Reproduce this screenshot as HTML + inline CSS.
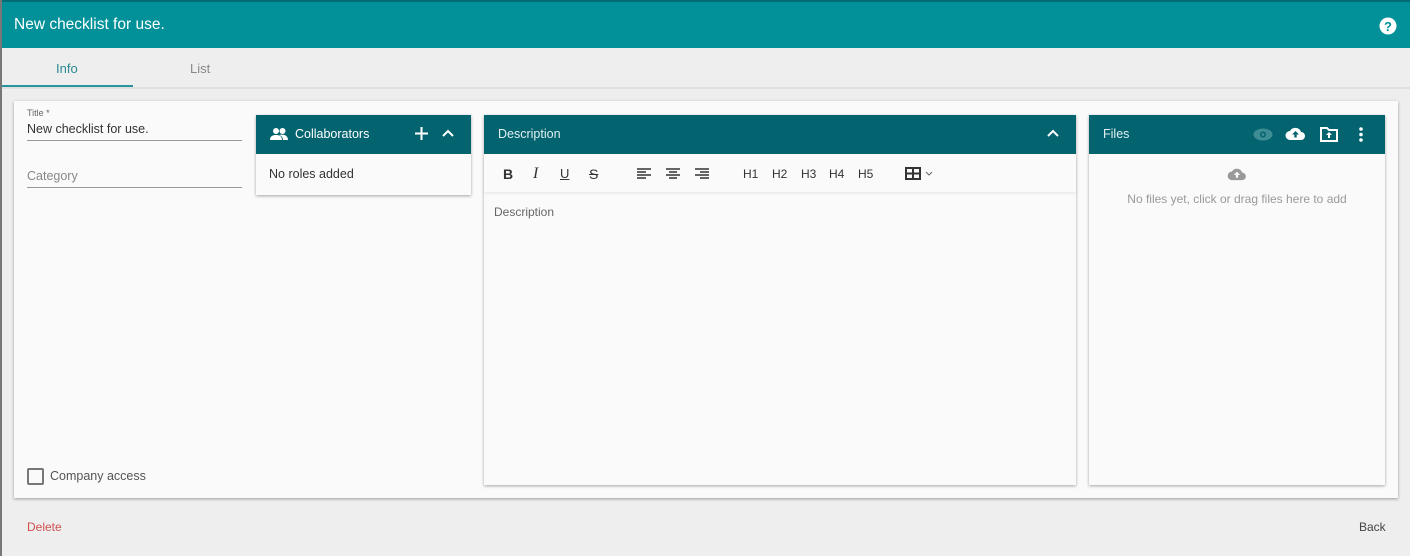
<!DOCTYPE html>
<html><head><meta charset="utf-8"><style>
*{box-sizing:border-box;margin:0;padding:0}
body{width:1410px;height:556px;background:#eeeeee;font-family:"Liberation Sans",sans-serif;position:relative;overflow:hidden}
.abs{position:absolute}
.top{left:0;top:0;width:1410px;height:48px;background:#029099;border-top:2px solid #006c73}
.top .t{left:14px;top:14px;color:#fff;font-size:15.5px}
.tabs{left:0;top:48px;width:1410px;height:41px;border-bottom:2px solid #e0e0e0}
.card{left:14px;top:101px;width:1384px;height:397px;background:#fafafa;box-shadow:0 1px 3px rgba(0,0,0,.35)}
.panel{background:#fafafa;box-shadow:0 1px 3px rgba(0,0,0,.35)}
.ph{height:39px;background:#03636f;color:#fff;font-size:13px}
.tb span{position:absolute;top:12px;font-size:12px;color:#333}
</style></head><body>
<div class="abs top"><div class="abs t">New checklist for use.</div>
<svg class="abs" style="left:1379px;top:15px" width="18" height="18" viewBox="0 0 18 18"><circle cx="9" cy="9" r="8.5" fill="#fff"/><text x="9" y="14" text-anchor="middle" font-size="13" font-weight="bold" fill="#029099" font-family="Liberation Sans">?</text></svg></div>
<div class="abs tabs">
<div class="abs" style="left:56px;top:13px;font-size:13px;color:#2a8a92">Info</div>
<div class="abs" style="left:190px;top:13px;font-size:13px;color:#888">List</div>
<div class="abs" style="left:0;top:37px;width:133px;height:2px;background:#2a949c"></div>
</div>
<div class="abs" style="left:0;top:0;width:2px;height:556px;background:#777"></div>
<div class="abs card"></div>
<div class="abs" style="left:27px;top:108px;font-size:9px;color:#666">Title *</div>
<div class="abs" style="left:27px;top:122px;font-size:12.5px;color:#333">New checklist for use.</div>
<div class="abs" style="left:27px;top:140px;width:215px;height:1px;background:#999"></div>
<div class="abs" style="left:27px;top:169px;font-size:12.5px;color:#888">Category</div>
<div class="abs" style="left:27px;top:187px;width:215px;height:1px;background:#999"></div>
<div class="abs" style="left:27px;top:468px;width:17px;height:17px;border:2px solid #777;border-radius:2px"></div>
<div class="abs" style="left:50px;top:469px;font-size:12.5px;color:#555">Company access</div>

<div class="abs panel" style="left:256px;top:115px;width:215px;height:80px">
<div class="ph" style="position:relative">
<svg class="abs" style="left:14px;top:12px" width="18" height="14" viewBox="0 0 18 14" fill="#fff"><circle cx="6" cy="4" r="3"/><circle cx="12.5" cy="4" r="3"/><path d="M0 13c0-4 3-5 6-5s6 1 6 5z M9 8c4-1 9 0 9 5h-5c0-2-1-4-4-5z"/></svg>
<div class="abs" style="left:39px;top:12px;font-size:12.5px">Collaborators</div>
<svg class="abs" style="left:159px;top:12px" width="13" height="13" viewBox="0 0 13 13"><path d="M6.5 0v13M0 6.5h13" stroke="#fff" stroke-width="2"/></svg>
<svg class="abs" style="left:186px;top:14px" width="12" height="8" viewBox="0 0 12 8"><path d="M1 7l5-5 5 5" stroke="#fff" stroke-width="2" fill="none"/></svg>
</div>
<div class="abs" style="left:13px;top:52px;font-size:12.5px;color:#333">No roles added</div>
</div>

<div class="abs panel" style="left:484px;top:115px;width:592px;height:370px">
<div class="ph" style="position:relative"><div class="abs" style="left:14px;top:12px;color:#e0f0f0;font-size:12.5px">Description</div>
<svg class="abs" style="left:563px;top:14px" width="12" height="8" viewBox="0 0 12 8"><path d="M1 7l5-5 5 5" stroke="#fff" stroke-width="2" fill="none"/></svg></div>
<div class="tb" style="position:relative;height:38px;box-shadow:0 2px 2px rgba(0,0,0,.06)">
<span style="left:19px;font-weight:bold;font-size:14px;top:12px">B</span>
<span style="left:49px;font-style:italic;font-family:'Liberation Serif';font-size:16px;top:11px">I</span>
<span style="left:76px;text-decoration:underline;font-size:13px;top:12px">U</span>
<span style="left:105px;text-decoration:line-through;font-size:14px;top:12px">S</span>
<svg class="abs" style="left:153px;top:14px" width="14" height="11" viewBox="0 0 14 11" stroke="#333" stroke-width="1.6"><path d="M0 1h14M0 4h9M0 7h14M0 10h9"/></svg>
<svg class="abs" style="left:182px;top:14px" width="14" height="11" viewBox="0 0 14 11" stroke="#333" stroke-width="1.6"><path d="M0 1h14M3 4h8M0 7h14M3 10h8"/></svg>
<svg class="abs" style="left:211px;top:14px" width="14" height="11" viewBox="0 0 14 11" stroke="#333" stroke-width="1.6"><path d="M0 1h14M5 4h9M0 7h14M5 10h9"/></svg>
<span style="left:259px;top:13px">H1</span><span style="left:288px;top:13px">H2</span><span style="left:317px;top:13px">H3</span><span style="left:345px;top:13px">H4</span><span style="left:374px;top:13px">H5</span>
<svg class="abs" style="left:421px;top:13px" width="30" height="13" viewBox="0 0 30 13"><rect x="1" y="1" width="14" height="11" fill="none" stroke="#333" stroke-width="2"/><path d="M1 6.5h14M8 1v11" stroke="#333" stroke-width="2"/><path d="M21 5l3 3 3-3" stroke="#666" fill="none"/></svg>
</div>
<div class="abs" style="left:10px;top:90px;font-size:12px;color:#666">Description</div>
</div>

<div class="abs panel" style="left:1089px;top:115px;width:296px;height:370px">
<div class="ph" style="position:relative"><div class="abs" style="left:14px;top:12px;color:#e0f0f0;font-size:12.5px">Files</div>
<svg class="abs" style="left:164px;top:13px" width="20" height="13" viewBox="0 0 20 13"><ellipse cx="10" cy="6.5" rx="9.5" ry="6" fill="#3e8d95"/><circle cx="10" cy="6.5" r="3" fill="#03636f"/><circle cx="10" cy="6.5" r="1.5" fill="#3e8d95"/></svg>
<svg class="abs" style="left:196px;top:11px" width="21" height="15" viewBox="0 0 21 15"><path d="M5 14a4.5 4.5 0 0 1 0-9a6 6 0 0 1 11 1a4 4 0 0 1 0 8z" fill="#fff"/><path d="M10.5 5l-3.5 3.5h2.3v3h2.4v-3h2.3z" fill="#03636f"/></svg>
<svg class="abs" style="left:231px;top:12px" width="18" height="15" viewBox="0 0 18 15"><path d="M1 1h6l2 2h8v11H1z" fill="none" stroke="#fff" stroke-width="2"/><path d="M9 5l-3 3h2v3h2V8h2z" fill="#fff"/></svg>
<svg class="abs" style="left:270px;top:12px" width="4" height="15" viewBox="0 0 4 15" fill="#fff"><circle cx="2" cy="2" r="1.8"/><circle cx="2" cy="7.5" r="1.8"/><circle cx="2" cy="13" r="1.8"/></svg>
</div>
<svg class="abs" style="left:138px;top:52px" width="20" height="14" viewBox="0 0 21 15"><path d="M5 14a4.5 4.5 0 0 1 0-9a6 6 0 0 1 11 1a4 4 0 0 1 0 8z" fill="#999"/><path d="M10.5 5l-3.5 3.5h2.3v3h2.4v-3h2.3z" fill="#fafafa"/></svg>
<div class="abs" style="left:0;width:296px;top:77px;text-align:center;font-size:12px;color:#999">No files yet, click or drag files here to add</div>
</div>

<div class="abs" style="left:27px;top:520px;font-size:12px;color:#d05050">Delete</div>
<div class="abs" style="left:1359px;top:520px;font-size:12px;color:#444">Back</div>
</body></html>
